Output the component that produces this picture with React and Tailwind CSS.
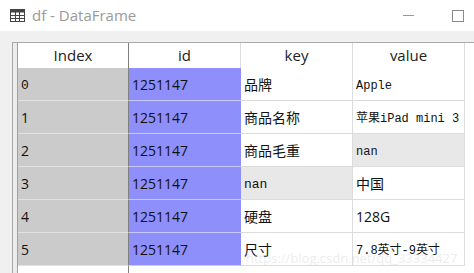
const rows = [
  { idx: "0", idxMono: true, id: "1251147", key: "品牌", value: "Apple", valueMono: true },
  { idx: "1", id: "1251147", key: "商品名称", value: "苹果iPad mini 3", valueMono: true },
  { idx: "2", id: "1251147", key: "商品毛重", value: "nan", valueMono: true, valueGray: true },
  { idx: "3", id: "1251147", key: "nan", keyGray: true, value: "中国" },
  { idx: "4", id: "1251147", key: "硬盘", value: "128G" },
  { idx: "5", id: "1251147", key: "尺寸", value: "7.8英寸-9英寸", valueMono: true },
];

const sans = "font-['Open_Sans','Noto_Sans_CJK_SC',sans-serif]";
const mono = "font-['Liberation_Mono','Noto_Sans_CJK_SC',monospace]";

function TableIcon() {
  return (
    <svg width="15" height="13" viewBox="0 0 15 13" className="shrink-0">
      <rect x="0.5" y="0.5" width="14" height="12" fill="none" stroke="#444" />
      <rect x="0.5" y="0.5" width="14" height="3" fill="#444" />
      <path d="M0 6.5h15M0 9.5h15M5.5 3v10M9.5 3v10" stroke="#444" />
    </svg>
  );
}

export default function App() {
  return (
    <div className="relative w-[474px] h-[273px] overflow-hidden bg-[#f0f0f0] flex flex-col">
      {/* title bar */}
      <div className="h-[31px] bg-white flex items-center pl-[10px] shrink-0">
        <TableIcon />
        <span className={`${sans} ml-[7px] text-[15px] text-[#9a9a9a] leading-none`}>
          df - DataFrame
        </span>
        <div className="flex-1" />
        <div className="w-[11px] h-px bg-[#9a9a9a] mr-[38px]" />
        <div className="w-[12px] h-[12px] border border-[#8a8a8a] mr-[10px]" />
      </div>

      {/* table frame */}
      <div className="flex-1 pt-[11px] pl-[12px] flex">
        <div className="flex-1 border-l border-t border-[#a8a8a8] bg-white flex">
          <div className="w-[4px] bg-[#ececec] shrink-0" />
          <div className="border-l border-[#a0a0a0] bg-white flex-1">
            <div className="grid grid-cols-[111px_112px_112px_112px]">
              {["Index", "id", "key", "value"].map((h, i) => (
                <div
                  key={h}
                  className={`${sans} h-[25px] flex items-center justify-center text-[15px] text-[#222] bg-white border-r ${
                    i === 0 ? "border-[#808080]" : "border-[#dcdcdc]"
                  }`}
                >
                  {h}
                </div>
              ))}
              {rows.map((r) => (
                <div key={r.idx} className="contents">
                  <div
                    className={`${r.idxMono ? mono + " text-[13px] pt-[3px]" : sans + " text-[14px]"} h-[33px] flex items-center pl-[3px] bg-[#cbcbcb] border-b border-[#e2e2e2] border-r border-r-[#808080] text-[#111]`}
                  >
                    {r.idx}
                  </div>
                  <div className={`${sans} h-[33px] flex items-center pl-[3px] bg-[#8f8ffc] border-b border-[#c8c8fd] text-[14px] text-[#111]`}>
                    {r.id}
                  </div>
                  <div
                    className={`${r.key === "nan" ? mono + " text-[13px] pt-[3px]" : sans + " text-[14px]"} h-[33px] flex items-center pl-[3px] border-b border-r border-[#dcdcdc] text-[#111] ${
                      r.keyGray ? "bg-[#e8e8e8]" : "bg-white"
                    }`}
                  >
                    {r.key}
                  </div>
                  <div
                    className={`${r.valueMono ? mono + " text-[12px] pt-[3px]" : sans + " text-[14px]"} h-[33px] flex items-center pl-[3px] border-b border-r border-[#dcdcdc] text-[#111] whitespace-nowrap overflow-hidden ${
                      r.valueGray ? "bg-[#e8e8e8]" : "bg-white"
                    }`}
                  >
                    {r.value}
                  </div>
                </div>
              ))}
              <div className="h-[10px] border-r border-[#808080] bg-white" />
            </div>
          </div>
        </div>
      </div>

      {/* watermark */}
      <div className={`${sans} absolute left-[246px] top-[249px] text-[13px] text-[#dadada]/50 whitespace-nowrap pointer-events-none`}>
        https://blog.csdn.net/qq_33334427
      </div>
    </div>
  );
}
